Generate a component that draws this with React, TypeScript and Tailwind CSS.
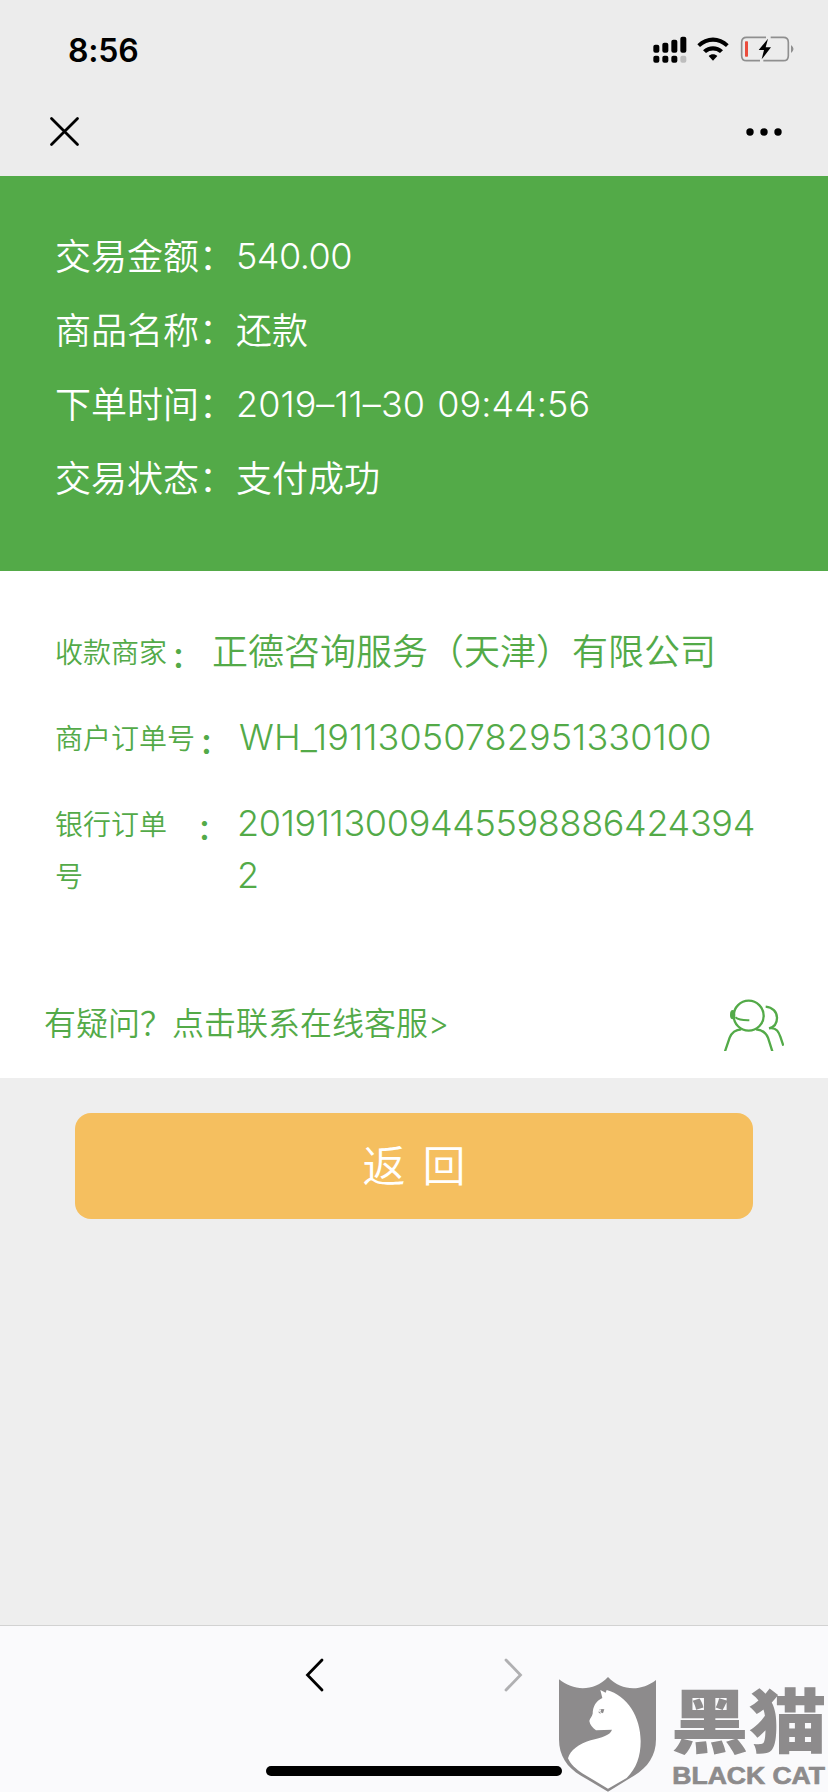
import React from 'react';

const summary = [
  { label: '交易金额', value: '540.00', style: 'font-light tracking-[-0.5px]' },
  { label: '商品名称', value: '还款', style: 'pt-px' },
  { label: '下单时间', value: '2019–11–30 09:44:56', style: 'font-light tracking-[0.05px] [word-spacing:2px]' },
  { label: '交易状态', value: '支付成功', style: 'pt-px' },
];

const StatusBar = () => (
  <div className="flex h-[98px] items-center justify-between pl-[68px] pr-[34px]">
    <span className="pt-[3px] text-[32px] font-semibold leading-none tracking-[-0.2px]">8:56</span>
    <div className="flex items-center">
      <svg className="h-[27px] w-[34px]" viewBox="0 0 102 81">
        <rect x="1" y="26" width="18" height="24" rx="6" />
        <rect x="28" y="20" width="18" height="30" rx="6" />
        <rect x="55" y="11" width="18" height="39" rx="6" />
        <rect x="82" y="2" width="18" height="48" rx="6" />
        <rect x="1" y="59" width="18" height="21" rx="6" />
        <rect x="28" y="59" width="18" height="21" rx="6" />
        <rect x="55" y="59" width="18" height="21" rx="6" />
        <rect x="82" y="59" width="18" height="21" rx="6" fill="#bdbdbd" />
      </svg>
      <svg className="ml-[10px] h-6 w-8" viewBox="0 0 96 72">
        <path d="M1 22C28-5 68-5 95 22L87 30C63 9 33 9 9 30Z" />
        <path d="M18 40C35 24 61 24 78 40L69 48C56 38 40 38 27 48Z" />
        <path d="M35 57C42 50 54 50 61 57L48 71Z" />
      </svg>
      <svg className="ml-[11px] h-[26px] w-[54px]" viewBox="0 0 162 78">
        <path
          d="M78 4H20Q5 4 5 19V59Q5 74 20 74H60M92 4H130Q145 4 145 19V59Q145 74 130 74H70"
          fill="none"
          stroke="#8f8f8f"
          strokeWidth="5"
        />
        <path d="M153 27Q168 39 153 51Z" fill="#8f8f8f" />
        <rect x="15" y="16" width="9" height="46" rx="2" fill="#eb4d3d" />
        <path d="M84 8L56 42H72L65 70L93 34H77Z" />
      </svg>
    </div>
  </div>
);

const NavBar = () => (
  <div className="flex h-[78px] items-center justify-between pb-[11px] pl-[49px] pr-[46px]">
    <svg className="h-[31px] w-[31px]" viewBox="0 0 31 31" fill="none" stroke="black" strokeWidth="2.8" strokeLinecap="round">
      <path d="M2.500 2.500L28.500 28.500M28.500 2.500L2.500 28.500" />
    </svg>
    <svg className="h-2 w-9" viewBox="0 0 36 8">
      <circle cx="4" cy="4" r="3.7" />
      <circle cx="18" cy="4" r="3.7" />
      <circle cx="32" cy="4" r="3.7" />
    </svg>
  </div>
);

const ServiceIcon = () => (
  <svg className="h-[54px] w-[62px]" viewBox="0 0 186 162" fill="none" stroke="#53aa48" strokeWidth="7">
    <circle cx="80" cy="56" r="45" />
    <path d="M58 97C39 98 29 107 23 122L9 163M102 97C121 98 131 107 138 122L151 163" />
    <path d="M40 61C52 71 66 70 82 70" strokeWidth="6" />
    <ellipse cx="32" cy="53" rx="8" ry="14" fill="#53aa48" stroke="none" />
    <path d="M131 29C151 31 165 44 165 63C165 77 158 90 141 94C166 90 171 108 176 122L184 146" />
  </svg>
);

const BlackCatLogo = () => (
  <svg className="absolute bottom-0 right-0 h-[132px] w-[288px]" viewBox="0 0 864 396">
    <path
      d="M57 58C101 94 162 95 204 51C246 95 304 94 348 60V238C348 287 323 323 282 347L204 395L123 347C81 323 57 287 57 238Z"
      fill="#8d8b8c"
    />
    <path
      d="M181 90L197 98L200 90C262 107 302 170 302 244C302 289 289 326 260 354L204 386L129 341C108 328 91 312 84 295C91 270 115 253 152 241C187 232 210 226 216 209L168 211C157 203 150 194 148 183C150 174 156 170 158 161C158 139 169 122 187 114Z"
      fill="#ffffff"
    />
    <path d="M176 152L184 147L181 157L189 160L193 148L184 147Q176 146 176 158L183 162" fill="#8d8b8c" />
    <g fill="#8d8b8c" fontFamily="'Liberation Sans', 'Noto Sans CJK SC', sans-serif" fontWeight="900">
      <text x="392" y="265" fontSize="212" textLength="468" lengthAdjust="spacingAndGlyphs">黑猫</text>
    </g>
    <g fill="#8d8b8c" fontFamily="'Liberation Sans', Inter, sans-serif" fontWeight="700" stroke="#8d8b8c" strokeWidth="2">
      <text x="397" y="373" fontSize="70" textLength="458" lengthAdjust="spacingAndGlyphs">BLACK CAT</text>
    </g>
  </svg>
);

const App = () => {
  return (
    <div className="flex h-[1792px] w-[828px] flex-col bg-[#eeeeee] font-['Inter','Noto_Sans_CJK_SC',sans-serif] text-black">
      <header className="h-[176px] bg-[#ececec]">
        <StatusBar />
        <NavBar />
      </header>

      <section className="h-[395px] bg-[#53aa48] px-[55px] pt-[43px] text-[36px] font-[350] leading-[74px] text-white">
        {summary.map((item) => (
          <div key={item.label} className="flex h-[74px] whitespace-pre">
            <span className="w-[181px] pt-px">{item.label}：</span>
            <span className={item.style}>{item.value}</span>
          </div>
        ))}
      </section>

      <section className="flex h-[507px] flex-col bg-white text-[36px] font-[350] leading-[52px] text-[#53aa48]">
        <div className="flex flex-col gap-[34px] pl-[55px] pt-[54px]">
          <div className="flex h-[52px]">
            <span className="w-[118px] pt-0.5 text-[28px]">收款商家</span>
            <span className="w-[39px] pt-1 font-medium">:</span>
            <span className="pt-px">正德咨询服务（天津）有限公司</span>
          </div>
          <div className="flex h-[52px]">
            <span className="w-[146px] pt-0.5 text-[28px]">商户订单号</span>
            <span className="w-[38px] pt-1 font-medium">:</span>
            <span className="font-light tracking-[0.1px]">WH_19113050782951330100</span>
          </div>
          <div className="flex h-[104px]">
            <span className="w-[129px] pt-0.5 text-[28px]">银行订单号</span>
            <span className="ml-[15px] w-[38px] pt-1 font-medium">:</span>
            <span className="w-[530px] break-all font-light tracking-[-0.35px]">20191130094455988864243942</span>
          </div>
        </div>
        <div className="mt-auto flex items-center justify-between pb-[27px] pl-11 pr-11">
          <span className="text-[32px]">有疑问？点击联系在线客服&gt;</span>
          <ServiceIcon />
        </div>
      </section>

      <main className="flex-1 px-[75px] pt-[35px]">
        <button className="h-[106px] w-full rounded-2xl bg-[#f5bf5f] text-[43px] font-[350] text-white [word-spacing:5px]">
          返 回
        </button>
      </main>

      <footer className="relative flex h-[167px] flex-col items-center justify-between border-t border-[#d2d2d2] bg-[#fafafc] pb-4 pt-[32px]">
        <div className="flex w-[218px] justify-between">
          <svg className="h-[34px] w-[19px]" viewBox="0 0 19 34" fill="none" stroke="black" strokeWidth="2.8" strokeLinecap="round">
            <path d="M17 2L2.500 17L17 32" />
          </svg>
          <svg className="h-[34px] w-[19px]" viewBox="0 0 19 34" fill="none" stroke="#b0b0b2" strokeWidth="2.8" strokeLinecap="round">
            <path d="M2 2L16.500 17L2 32" />
          </svg>
        </div>
        <div className="h-[10px] w-[296px] rounded-full bg-black" />
        <BlackCatLogo />
      </footer>
    </div>
  );
};

export default App;
